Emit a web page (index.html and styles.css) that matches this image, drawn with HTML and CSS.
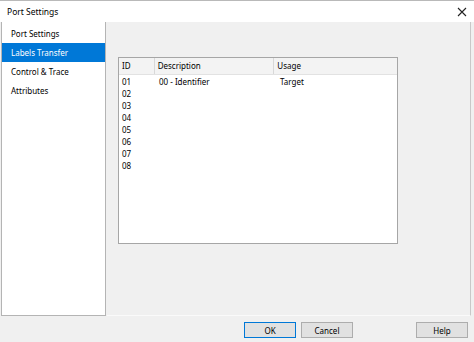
FILE: index.html
```html
<!DOCTYPE html>
<html lang="en">
<head>
    <meta charset="UTF-8">
    <title>Port Settings</title>
    <link rel="stylesheet" href="styles.css">
</head>
<body>
    <div class="window">
        <div class="titlebar">
            <span class="title">Port Settings</span>
            <svg class="close" width="10" height="10" viewBox="0 0 10 10">
                <path d="M1 1 L9 9 M9 1 L1 9" stroke="#222" stroke-width="1.1" fill="none"/>
            </svg>
        </div>

        <div class="main">
            <ul class="nav">
                <li>Port Settings</li>
                <li class="active">Labels Transfer</li>
                <li>Control &amp; Trace</li>
                <li>Attributes</li>
            </ul>

            <div class="content">
                <div class="grid">
                    <div class="grid-head">
                        <div class="cell col-id">ID</div>
                        <div class="cell col-desc">Description</div>
                        <div class="cell col-usage">Usage</div>
                        <div class="cell col-fill"></div>
                    </div>
                    <div class="grid-body">
                        <div class="row"><span>01</span><span>00 - Identifier</span><span>Target</span></div>
                        <div class="row"><span>02</span><span></span><span></span></div>
                        <div class="row"><span>03</span><span></span><span></span></div>
                        <div class="row"><span>04</span><span></span><span></span></div>
                        <div class="row"><span>05</span><span></span><span></span></div>
                        <div class="row"><span>06</span><span></span><span></span></div>
                        <div class="row"><span>07</span><span></span><span></span></div>
                        <div class="row"><span>08</span><span></span><span></span></div>
                    </div>
                </div>
            </div>
        </div>

        <div class="footer">
            <button class="btn focused">OK</button>
            <button class="btn">Cancel</button>
            <button class="btn help">Help</button>
        </div>
    </div>
</body>
</html>
```

FILE: styles.css
```css
body {
    margin: 0;
    font-family: "Noto Sans", "Open Sans", Arial, sans-serif;
    font-size: 8px;
    color: #000;
    background-color: #f0f0f0;
}
.window {
    width: 474px;
    height: 342px;
    display: flex;
    flex-direction: column;
    border-top: 1px solid #b9b9b9;
    box-sizing: border-box;
}
.titlebar {
    height: 21px;
    background-color: white;
    display: flex;
    align-items: center;
    justify-content: space-between;
    padding: 0 7px 0 7px;
    flex-shrink: 0;
}
.title {
    font-size: 8.5px;
}
.main {
    height: 294px;
    display: flex;
    flex-shrink: 0;
}
.nav {
    list-style: none;
    margin: 0 0 0 1px;
    padding: 2px 0 0 0;
    width: 103px;
    background-color: white;
    border: 1px solid #b4b4b4;
    border-top: none;
}
.nav li {
    height: 19px;
    line-height: 19px;
    padding-left: 9px;
    white-space: nowrap;
}
.nav li.active {
    background-color: #0078d7;
    color: white;
}
.content {
    flex: 1;
    margin-left: 1px;
    margin-right: 3px;
    padding: 35px 0 0 11px;
    border-right: 1px solid #c8c8c8;
    border-bottom: 1px solid #fafafa;
}
.grid {
    width: 278px;
    height: 185px;
    background-color: white;
    border: 1px solid #a6a6a6;
    display: flex;
    flex-direction: column;
}
.grid-head {
    display: flex;
    height: 16px;
    background-color: #f3f3f3;
    border-bottom: 1px solid #e2e2e2;
    flex-shrink: 0;
}
.cell {
    line-height: 16px;
    padding-left: 3px;
    border-right: 1px solid #d8d8d8;
    box-sizing: border-box;
}
.col-id { width: 36px; }
.col-desc { width: 121px; }
.col-usage { width: 121px; border-right: none; }
.col-fill { flex: 1; border-right: none; }
.grid-body {
    padding-top: 1px;
}
.row {
    display: flex;
    height: 12px;
    line-height: 12px;
}
.row span:nth-child(1) { width: 36px; padding-left: 3px; box-sizing: border-box; }
.row span:nth-child(2) { width: 121px; padding-left: 4px; box-sizing: border-box; }
.row span:nth-child(3) { width: 121px; padding-left: 4px; box-sizing: border-box; }
.footer {
    flex: 1;
    display: flex;
    align-items: flex-start;
    padding: 6px 6px 0 0;
    gap: 5px;
    justify-content: flex-end;
}
.btn {
    width: 52px;
    height: 16px;
    padding: 0;
    font-family: inherit;
    font-size: 8px;
    color: #000;
    background-color: #e1e1e1;
    border: 1px solid #adadad;
    box-sizing: border-box;
}
.btn.focused {
    border-color: #0078d7;
}
.btn.help {
    margin-left: 58px;
}
```
